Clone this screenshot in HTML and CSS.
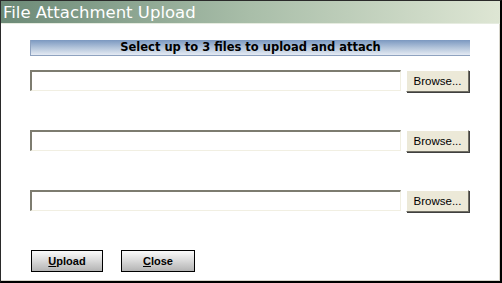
FILE: index.html
```html
<!DOCTYPE html>
<html>
<head>
<meta charset="utf-8">
<link rel="stylesheet" href="styles.css">
</head>
<body>
<div class="window">
  <div class="titlebar">File Attachment Upload</div>
  <div class="content">
    <div class="header">Select up to 3 files to upload and attach</div>
    <div class="rows">
      <div class="row"><div class="field"></div><div class="browse">Browse...</div></div>
      <div class="row"><div class="field"></div><div class="browse">Browse...</div></div>
      <div class="row"><div class="field"></div><div class="browse">Browse...</div></div>
    </div>
    <div class="actions">
      <div class="btn btn-upload"><u>U</u>pload</div>
      <div class="btn btn-close"><u>C</u>lose</div>
    </div>
  </div>
</div>
</body>
</html>
```
FILE: styles.css
```css
html, body {
  margin: 0;
  padding: 0;
  background: #ffffff;
}
.window {
  width: 502px;
  height: 283px;
  box-sizing: border-box;
  border-top: 1px solid #2a2a2a;
  border-left: 1px solid #2a2a2a;
  border-right: 2px solid #000;
  border-bottom: 2px solid #000;
  box-shadow: inset -1px -1px 0 #d8d6cc;
  background: #fff;
  display: flex;
  flex-direction: column;
}
.titlebar {
  height: 22px;
  border-bottom: 1px solid #e6ece0;
  background: linear-gradient(to right, #6c8a77 0%, #a9bea9 50%, #dee6d4 100%);
  color: #ffffff;
  font-family: "DejaVu Sans", Verdana, sans-serif;
  font-size: 16.5px;
  line-height: 23px;
  padding-left: 2px;
  white-space: nowrap;
}
.content {
  padding: 16px 0 0 29px;
  display: flex;
  flex-direction: column;
}
.header {
  width: 439px;
  height: 15px;
  border-left: 1px solid #8ea2bf;
  border-bottom: 1px solid #8ea2bf;
  background: linear-gradient(to bottom, #7b98c0 0%, #b6c7dc 55%, #e4eaf3 100%);
  font-family: "DejaVu Sans", Verdana, sans-serif;
  font-weight: bold;
  font-size: 11.5px;
  line-height: 15px;
  text-align: center;
  color: #000;
}
.rows {
  margin-top: 14px;
  display: flex;
  flex-direction: column;
  gap: 38px;
}
.row {
  display: flex;
  gap: 5px;
  height: 22px;
}
.field {
  width: 368px;
  height: 18px;
  border-top: 2px solid #7d7c70;
  border-left: 2px solid #7d7c70;
  border-right: 1px solid #f1efe2;
  border-bottom: 1px solid #f1efe2;
  background: #fff;
}
.browse {
  width: 61px;
  height: 20px;
  border-top: 1px solid #ffffff;
  border-left: 1px solid #ffffff;
  border-right: 1px solid #716f64;
  border-bottom: 1px solid #716f64;
  box-shadow: 1px 1px 0 #404040;
  background: #ece9d8;
  font-family: "Liberation Sans", Arial, sans-serif;
  font-size: 11.5px;
  line-height: 20px;
  text-align: center;
  color: #000;
}
.actions {
  margin-top: 38px;
  display: flex;
  gap: 18px;
  padding-left: 1px;
}
.btn {
  height: 20px;
  border: 1px solid #000;
  background: linear-gradient(to bottom, #fafafa 0%, #dcdcdc 45%, #b4b4b4 100%);
  font-family: "Liberation Sans", Arial, sans-serif;
  font-weight: bold;
  font-size: 11px;
  line-height: 20px;
  text-align: center;
  color: #000;
}
.btn-upload { width: 70px; }
.btn-close { width: 72px; }
```
